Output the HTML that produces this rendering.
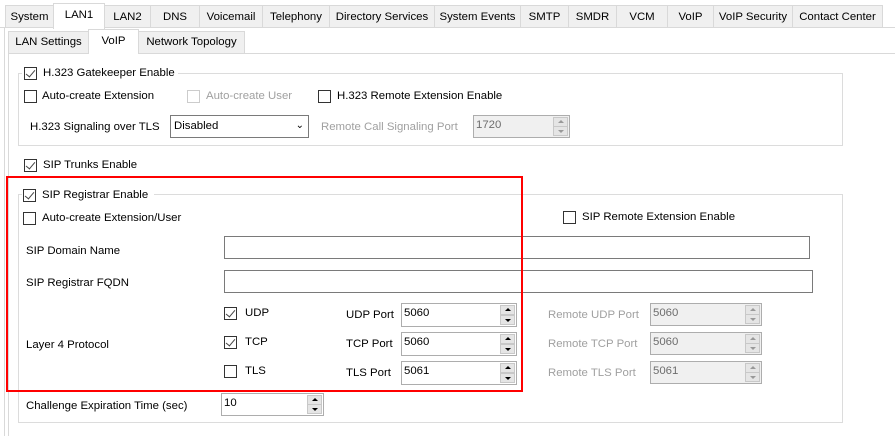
<!DOCTYPE html><html><head><style>
*{box-sizing:border-box}
body{margin:0;width:895px;height:436px;background:#fff;font-family:"Liberation Sans",sans-serif;font-size:11.4px;color:#000;position:relative;overflow:hidden}
.a{position:absolute;white-space:nowrap}
.t{margin-top:1px}
.tab{position:absolute;top:5px;height:23px;background:#f0f0f0;border:1px solid #d9d9d9;border-bottom:none;text-align:center;line-height:22px}
.sel{top:3px;height:26px;background:#fff;line-height:23px;z-index:2}
.cb{position:absolute;width:13px;height:13px;border:1px solid #333;background:#fff}
.cb.ck:after{content:"";position:absolute;left:3px;top:0px;width:4px;height:8px;border:solid #444;border-width:0 1.5px 1.5px 0;transform:rotate(40deg)}
.cb.dis{border-color:#ccc}
.grp{position:absolute;border:1px solid #dcdcdc}
.in{position:absolute;border:1px solid #7a7a7a;background:#fff;padding:2px 3px;line-height:16px}
.spin{position:absolute;border:1px solid #adadad;background:#fff;padding:1px 2px;line-height:16px}
.spin.d{background:#f0f0f0;color:#6d6d6d}
.spin .b{position:absolute;right:1px;width:15px;height:10px;background:#e5e5e5;border:1px solid #c8c8c8}
.spin .u{top:1px}.spin .w{bottom:1px}
.u:after{content:"";position:absolute;left:4px;top:2px;border:3px solid transparent;border-bottom:3px solid #000;border-top:none}
.w:after{content:"";position:absolute;left:4px;top:3px;border:3px solid transparent;border-top:3px solid #000;border-bottom:none}
.spin.d .u:after{border-bottom-color:#999}.spin.d .w:after{border-top-color:#999}
.g{color:#a0a0a0}
</style></head><body>
<div class="tab" style="left:5px;width:49px">System</div>
<div class="tab sel" style="left:53px;width:52px">LAN1</div>
<div class="tab" style="left:104px;width:47px">LAN2</div>
<div class="tab" style="left:150px;width:50px">DNS</div>
<div class="tab" style="left:199px;width:64px">Voicemail</div>
<div class="tab" style="left:262px;width:68px">Telephony</div>
<div class="tab" style="left:329px;width:106px">Directory Services</div>
<div class="tab" style="left:434px;width:87px">System Events</div>
<div class="tab" style="left:520px;width:49px">SMTP</div>
<div class="tab" style="left:568px;width:49px">SMDR</div>
<div class="tab" style="left:616px;width:52px">VCM</div>
<div class="tab" style="left:667px;width:47px">VoIP</div>
<div class="tab" style="left:713px;width:80px">VoIP Security</div>
<div class="tab" style="left:792px;width:91px">Contact Center</div>
<div class="a" style="left:0;top:27px;width:895px;height:1px;background:#d9d9d9"></div>
<div class="a" style="left:4px;top:28px;width:1px;height:408px;background:#d9d9d9"></div>
<div class="tab" style="left:8px;top:31px;width:81px;height:22px;line-height:21px">LAN Settings</div>
<div class="tab sel" style="left:88px;top:29px;width:51px;height:25px;line-height:23px">VoIP</div>
<div class="tab" style="left:138px;top:31px;width:107px;height:22px;line-height:21px">Network Topology</div>
<div class="a" style="left:8px;top:53px;width:887px;height:1px;background:#d9d9d9"></div>
<div class="a" style="left:8px;top:53px;width:1px;height:383px;background:#d9d9d9"></div>

<div class="grp" style="left:18px;top:73px;width:825px;height:73px"></div>
<div class="a" style="left:22px;top:65px;width:156px;height:16px;background:#fff"></div>
<div class="cb ck" style="left:24px;top:67px"></div><div class="a t" style="left:43px;top:66px">H.323 Gatekeeper Enable</div>
<div class="cb" style="left:24px;top:90px"></div><div class="a t" style="left:42px;top:89px">Auto-create Extension</div>
<div class="cb dis" style="left:187px;top:90px"></div><div class="a t g" style="left:206px;top:89px">Auto-create User</div>
<div class="cb" style="left:318px;top:90px"></div><div class="a t" style="left:337px;top:89px">H.323 Remote Extension Enable</div>
<div class="a t" style="left:30px;top:120px">H.323 Signaling over TLS</div>
<div class="in" style="left:170px;top:115px;width:139px;height:23px">Disabled<span style="position:absolute;right:4px;top:2px;font-size:10px">&#8964;</span></div>
<div class="a t g" style="left:321px;top:120px">Remote Call Signaling Port</div>
<div class="spin d" style="left:473px;top:115px;width:97px;height:23px">1720<div class="b u"></div><div class="b w"></div></div>

<div class="cb ck" style="left:24px;top:159px"></div><div class="a t" style="left:43px;top:158px">SIP Trunks Enable</div>

<div class="grp" style="left:18px;top:194px;width:825px;height:229px"></div>
<div class="a" style="left:22px;top:187px;width:132px;height:16px;background:#fff"></div>
<div class="cb ck" style="left:23px;top:189px"></div><div class="a t" style="left:42px;top:188px">SIP Registrar Enable</div>
<div class="cb" style="left:23px;top:212px"></div><div class="a t" style="left:42px;top:211px">Auto-create Extension/User</div>
<div class="cb" style="left:563px;top:211px"></div><div class="a t" style="left:582px;top:210px">SIP Remote Extension Enable</div>
<div class="a t" style="left:26px;top:244px">SIP Domain Name</div>
<div class="in" style="left:224px;top:236px;width:586px;height:23px"></div>
<div class="a t" style="left:26px;top:276px">SIP Registrar FQDN</div>
<div class="in" style="left:224px;top:270px;width:589px;height:23px"></div>
<div class="a t" style="left:26px;top:338px">Layer 4 Protocol</div>
<div class="cb ck" style="left:224px;top:307px"></div><div class="a t" style="left:245px;top:306px">UDP</div>
<div class="cb ck" style="left:224px;top:336px"></div><div class="a t" style="left:245px;top:335px">TCP</div>
<div class="cb" style="left:224px;top:365px"></div><div class="a t" style="left:245px;top:364px">TLS</div>
<div class="a t" style="left:346px;top:308px">UDP Port</div>
<div class="a t" style="left:346px;top:337px">TCP Port</div>
<div class="a t" style="left:346px;top:366px">TLS Port</div>
<div class="spin" style="left:401px;top:303px;width:116px;height:24px">5060<div class="b u"></div><div class="b w"></div></div>
<div class="spin" style="left:401px;top:332px;width:116px;height:24px">5060<div class="b u"></div><div class="b w"></div></div>
<div class="spin" style="left:401px;top:361px;width:116px;height:24px">5061<div class="b u"></div><div class="b w"></div></div>
<div class="a t g" style="left:548px;top:308px">Remote UDP Port</div>
<div class="a t g" style="left:548px;top:337px">Remote TCP Port</div>
<div class="a t g" style="left:548px;top:366px">Remote TLS Port</div>
<div class="spin d" style="left:650px;top:303px;width:112px;height:23px">5060<div class="b u"></div><div class="b w"></div></div>
<div class="spin d" style="left:650px;top:332px;width:112px;height:23px">5060<div class="b u"></div><div class="b w"></div></div>
<div class="spin d" style="left:650px;top:361px;width:112px;height:23px">5061<div class="b u"></div><div class="b w"></div></div>
<div class="a t" style="left:26px;top:399px">Challenge Expiration Time (sec)</div>
<div class="spin" style="left:221px;top:393px;width:103px;height:23px">10<div class="b u"></div><div class="b w"></div></div>

<div class="a" style="left:6px;top:176px;width:517px;height:216px;border:2px solid #f00"></div>
</body></html>
